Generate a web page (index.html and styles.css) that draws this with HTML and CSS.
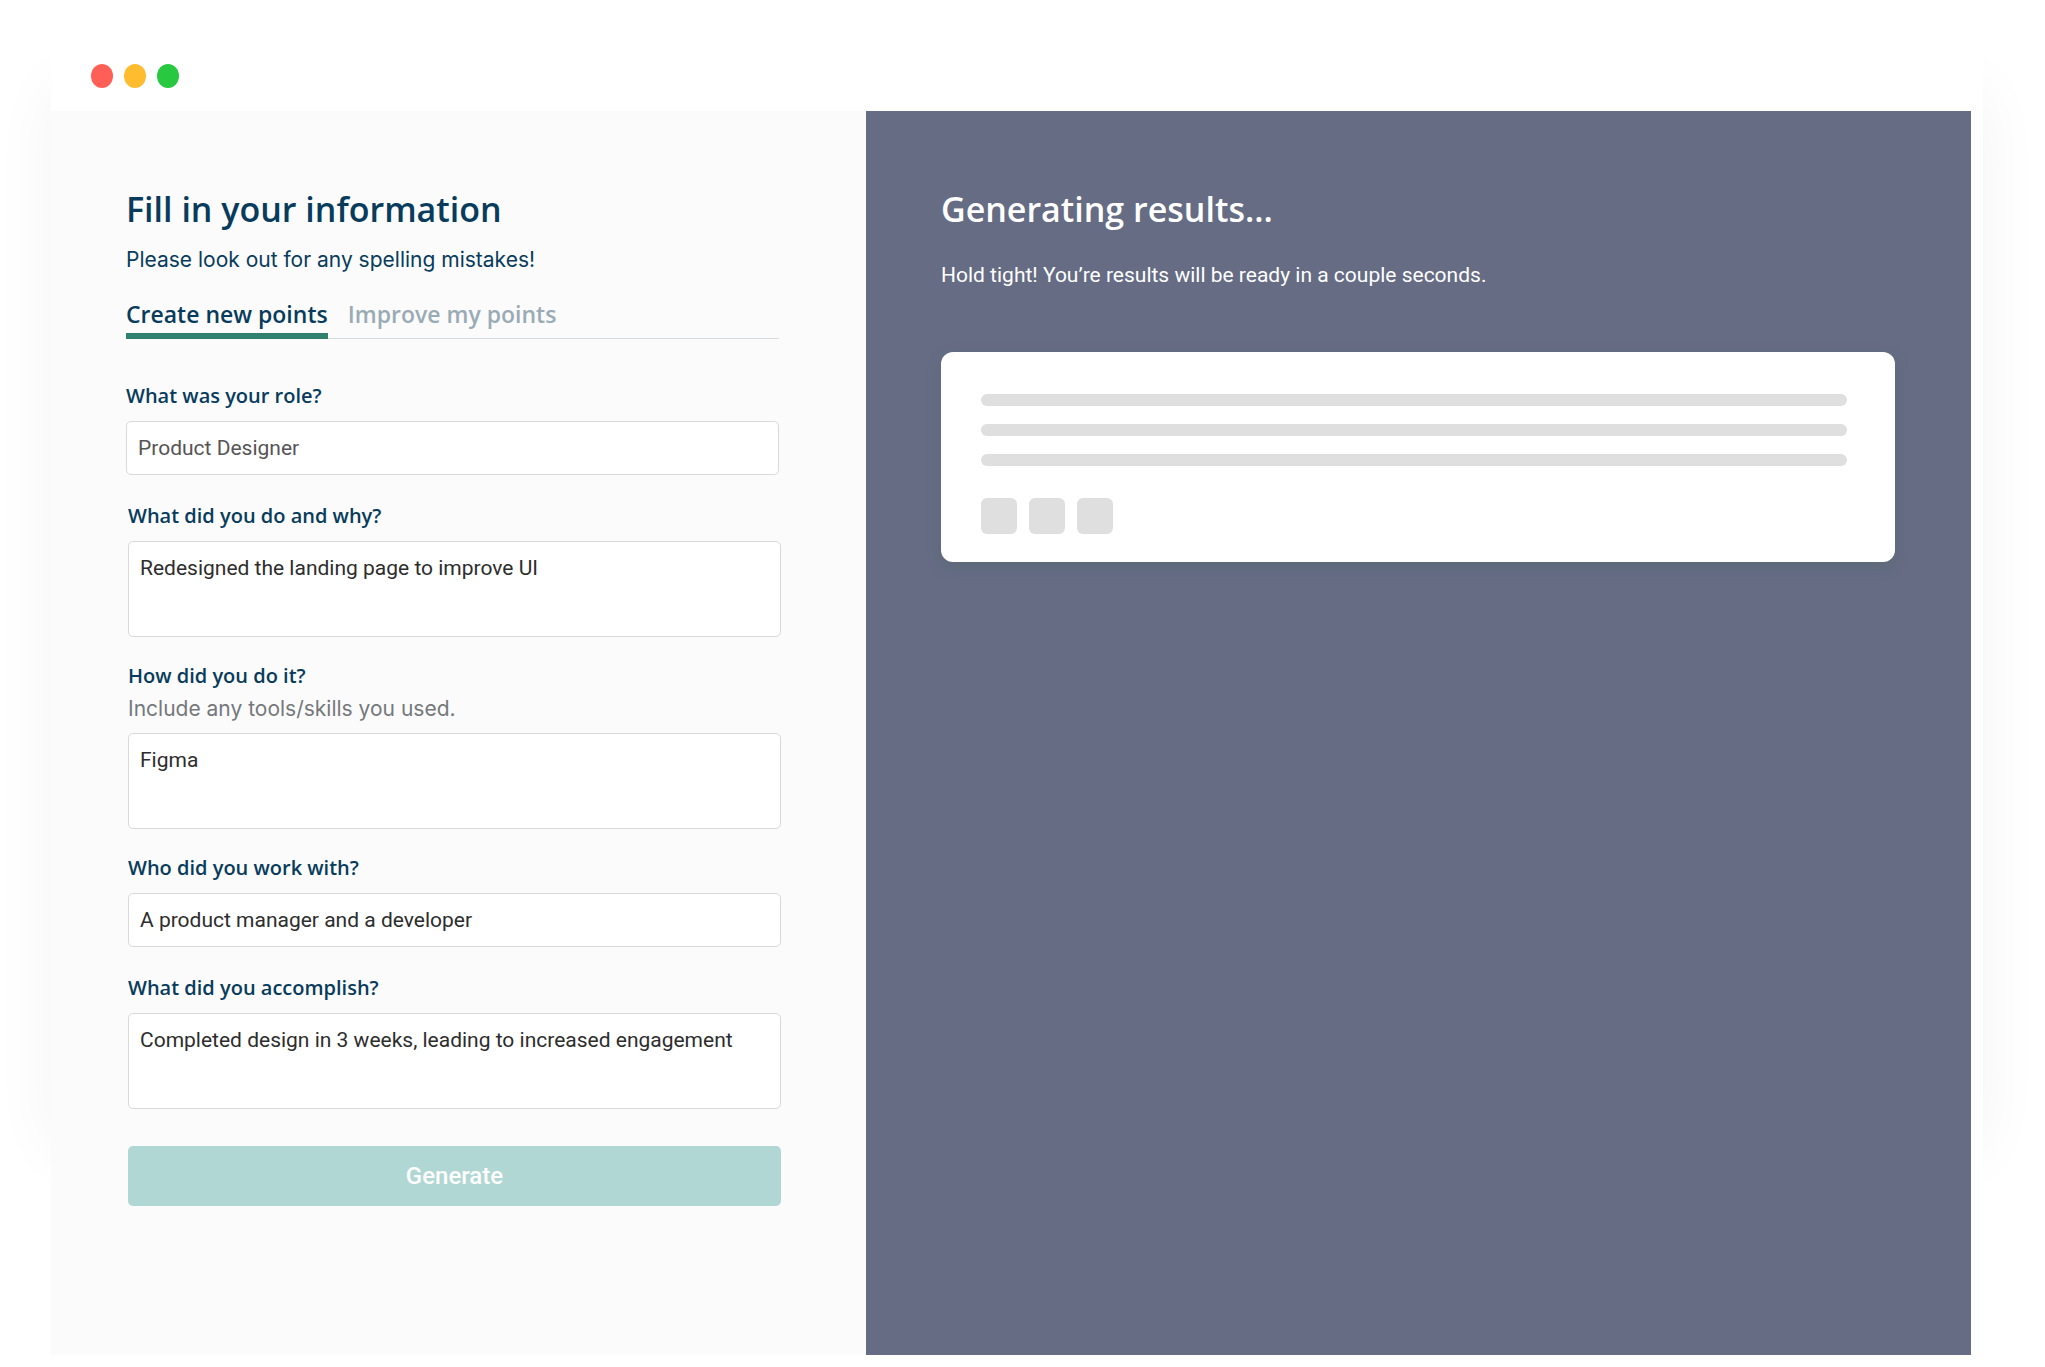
FILE: index.html
```html
<!DOCTYPE html>
<html lang="en">
<head>
  <meta charset="utf-8">
  <meta name="viewport" content="width=device-width, initial-scale=1">
  <title>Fill in your information</title>
  <link rel="stylesheet" href="styles.css">
</head>
<body>
  <div class="window">
    <header class="titlebar">
      <span class="dot dot-red"></span>
      <span class="dot dot-yellow"></span>
      <span class="dot dot-green"></span>
    </header>
    <main class="panes">
      <section class="pane form-pane">
        <h1 class="title">Fill in your information</h1>
        <p class="subtitle">Please look out for any spelling mistakes!</p>
        <nav class="tabs">
          <a class="tab tab-active" href="#create" aria-current="page">Create new points</a>
          <a class="tab" href="#improve">Improve my points</a>
        </nav>
        <form class="form">
          <div class="field">
            <label class="label" for="role">What was your role?</label>
            <input class="control muted" id="role" type="text" value="Product Designer">
          </div>
          <div class="details">
            <div class="field field-area">
              <label class="label" for="what">What did you do and why?</label>
              <textarea class="control area" id="what">Redesigned the landing page to improve UI</textarea>
            </div>
            <div class="field field-area">
              <label class="label label-hinted" for="how">How did you do it?</label>
              <p class="hint" id="how-hint">Include any tools/skills you used.</p>
              <textarea class="control area" id="how" aria-describedby="how-hint">Figma</textarea>
            </div>
            <div class="field">
              <label class="label" for="who">Who did you work with?</label>
              <input class="control" id="who" type="text" value="A product manager and a developer">
            </div>
            <div class="field field-area">
              <label class="label" for="result">What did you accomplish?</label>
              <textarea class="control area" id="result">Completed design in 3 weeks, leading to increased engagement</textarea>
            </div>
            <button class="generate" type="button">Generate</button>
          </div>
        </form>
      </section>
      <section class="pane results-pane">
        <h2 class="title title-light">Generating results...</h2>
        <p class="status">Hold tight! You’re results will be ready in a couple seconds.</p>
        <div class="card">
          <div class="lines">
            <span class="line"></span>
            <span class="line"></span>
            <span class="line"></span>
          </div>
          <div class="chips">
            <span class="chip"></span>
            <span class="chip"></span>
            <span class="chip"></span>
          </div>
        </div>
      </section>
    </main>
  </div>
</body>
</html>
```

FILE: styles.css
```css
* {
  box-sizing: border-box;
}

body {
  margin: 0;
  background: #fff;
  font-family: Roboto, "Liberation Sans", sans-serif;
  color: #2d2d2d;
}

h1,
h2,
p {
  margin: 0;
}

.window {
  position: relative;
  margin: 28px 62px 11px 51px;
}

/* soft shadow that fades out before the bottom of the window */
.window::before {
  content: "";
  position: absolute;
  inset: 56px 0 200px;
  z-index: -1;
  border-radius: 32px;
  box-shadow: 0 0 64px rgba(0, 0, 0, 0.05);
}

.titlebar {
  display: flex;
  gap: 11px;
  height: 83px;
  padding: 36px 40px;
  border-radius: 32px 32px 0 0;
  background: #fff;
}

.dot {
  flex: none;
  width: 22px;
  height: 24px;
  border-radius: 50%;
}

.dot-red {
  background: #ff5f57;
}

.dot-yellow {
  background: #febc2e;
}

.dot-green {
  background: #28c840;
}

.panes {
  display: grid;
  grid-template-columns: 815fr 1105fr;
  padding-right: 12px;
  background: #fff;
}

.pane {
  padding: 74px 76px 149px 75px;
}

.form-pane {
  padding-right: 85px;
  background: #fbfbfb;
}

.results-pane {
  background: #656c84;
}

.title {
  font: 600 34px/48px "Open Sans", "Noto Sans", sans-serif;
  color: #083b5c;
}

.title-light {
  color: #fff;
}

.subtitle {
  margin-top: 13px;
  font: 400 21px/28px Inter, sans-serif;
  color: #083b5c;
}

.tabs {
  display: flex;
  gap: 20px;
  height: 52px;
  margin: 13px 2px 0 0;
  border-bottom: 1px solid #d8dcde;
  padding-top: 11px;
}

.tab {
  height: 41px;
  font: 600 23px/32px "Open Sans", "Noto Sans", sans-serif;
  color: #9aabb5;
  text-decoration: none;
}

.tab-active {
  border-bottom: 6px solid #2f806f;
  color: #083b5c;
}

.form {
  margin-top: 43px;
}

.field {
  margin: 0 2px 27px 0;
}

.label {
  display: block;
  margin-bottom: 11px;
  font: 600 20px/28px "Open Sans", "Noto Sans", sans-serif;
  color: #083b5c;
}

.label-hinted {
  margin-bottom: 5px;
}

.hint {
  margin-bottom: 10px;
  font: 400 21px/28px Inter, sans-serif;
  color: #75787b;
}

.control {
  display: block;
  width: 100%;
  height: 54px;
  padding: 12px 11px;
  border: 1px solid #d9d9d9;
  border-radius: 5px;
  background: #fff;
  font: 400 21px/28px Roboto, sans-serif;
  color: #2d2d2d;
}

.muted {
  color: #555;
}

.area {
  height: 96px;
  resize: none;
}

.details {
  padding-left: 2px;
}

.details .field {
  margin-right: 0;
}

.field-area {
  margin-bottom: 25px;
}

.generate {
  width: 100%;
  height: 60px;
  margin-top: 12px;
  border: 0;
  border-radius: 5px;
  background: #b0d7d3;
  font: 500 24px/32px Roboto, sans-serif;
  color: #fff;
}

.status {
  margin-top: 28px;
  font-size: 21px;
  line-height: 28px;
  color: #fff;
}

.card {
  margin-top: 63px;
  padding: 42px 48px 28px 40px;
  border-radius: 12px;
  background: #fff;
  box-shadow: 0 5px 12px rgba(88, 104, 112, 0.6);
}

.lines {
  display: grid;
  gap: 18px;
}

.line {
  height: 12px;
  border-radius: 6px;
  background: #dfdfdf;
}

.chips {
  display: flex;
  gap: 12px;
  margin-top: 32px;
}

.chip {
  width: 36px;
  height: 36px;
  border-radius: 6px;
  background: #dfdfdf;
}
```
